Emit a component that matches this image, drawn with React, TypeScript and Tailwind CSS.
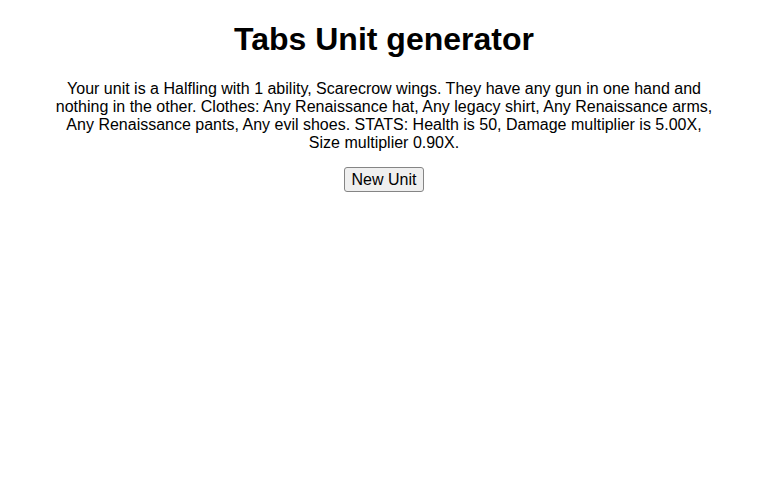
import React from "react";

const description =
  "Your unit is a Halfling with 1 ability, Scarecrow wings. They have any gun in one hand and nothing in the other. Clothes: Any Renaissance hat, Any legacy shirt, Any Renaissance arms, Any Renaissance pants, Any evil shoes. STATS: Health is 50, Damage multiplier is 5.00X, Size multiplier 0.90X.";

export default function App() {
  return (
    <div className="min-h-[480px] bg-white px-[52px] text-center text-black font-['Liberation_Sans',Arial,sans-serif]">
      <h1 className="pt-[21px] pb-[22px] text-[32px] leading-[37px] font-bold">
        Tabs Unit generator
      </h1>
      <p className="text-base leading-[18px]">{description}</p>
      <div className="mt-[15px]">
        <button
          type="button"
          className="rounded-[3px] border border-[#858585] bg-[#efefef] px-[7px] py-[2px] text-base leading-[19px] text-black hover:bg-[#e5e5e5]"
        >
          New Unit
        </button>
      </div>
    </div>
  );
}
